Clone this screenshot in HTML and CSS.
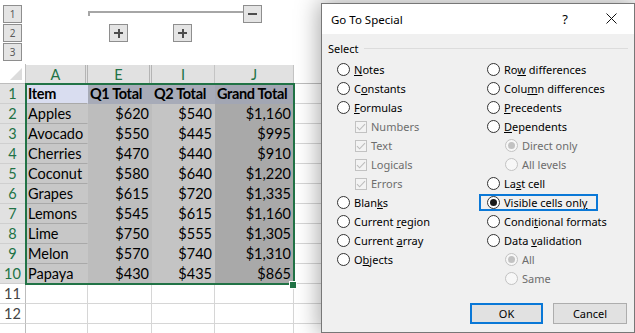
FILE: index.html
```html
<!DOCTYPE html>
<html>
<head>
<meta charset="utf-8">
<link rel="stylesheet" href="styles.css">
</head>
<body>
<div class="sheet">
  <div class="outline">
    <div class="levels">
      <div class="obtn">1</div>
      <div class="obtn">2</div>
      <div class="obtn">3</div>
    </div>
    <div class="groups">
      <div class="grow1">
        <div class="bracket"></div>
        <div class="obtn minus"><span class="bar"></span></div>
      </div>
      <div class="grow2">
        <div class="obtn plus p1"><span class="bar"></span><span class="vbar"></span></div>
        <div class="obtn plus p2"><span class="bar"></span><span class="vbar"></span></div>
      </div>
    </div>
  </div>
  <div class="grid">
    <div class="corner"></div><div class="ch hid">A</div><div class="ch hid">E</div><div class="ch">I</div><div class="ch">J</div><div class="chk"></div>

    <div class="rh sel">1</div><div class="c a1 b">Item</div><div class="c h1 b">Q1 Total</div><div class="c h1 b">Q2 Total</div><div class="c h1j b">Grand Total</div><div class="c"></div>
    <div class="rh sel">2</div><div class="c ca">Apples</div><div class="c ce r">$620</div><div class="c ci r">$540</div><div class="c cj r">$1,160</div><div class="c"></div>
    <div class="rh sel">3</div><div class="c ca">Avocado</div><div class="c ce r">$550</div><div class="c ci r">$445</div><div class="c cj r">$995</div><div class="c"></div>
    <div class="rh sel">4</div><div class="c ca">Cherries</div><div class="c ce r">$470</div><div class="c ci r">$440</div><div class="c cj r">$910</div><div class="c"></div>
    <div class="rh sel">5</div><div class="c ca">Coconut</div><div class="c ce r">$580</div><div class="c ci r">$640</div><div class="c cj r">$1,220</div><div class="c"></div>
    <div class="rh sel">6</div><div class="c ca">Grapes</div><div class="c ce r">$615</div><div class="c ci r">$720</div><div class="c cj r">$1,335</div><div class="c"></div>
    <div class="rh sel">7</div><div class="c ca">Lemons</div><div class="c ce r">$545</div><div class="c ci r">$615</div><div class="c cj r">$1,160</div><div class="c"></div>
    <div class="rh sel">8</div><div class="c ca">Lime</div><div class="c ce r">$750</div><div class="c ci r">$555</div><div class="c cj r">$1,305</div><div class="c"></div>
    <div class="rh sel">9</div><div class="c ca">Melon</div><div class="c ce r">$570</div><div class="c ci r">$740</div><div class="c cj r">$1,310</div><div class="c"></div>
    <div class="rh sel">10</div><div class="c ca">Papaya</div><div class="c ce r">$430</div><div class="c ci r">$435</div><div class="c cj r">$865</div><div class="c"></div>
    <div class="rh">11</div><div class="c"></div><div class="c"></div><div class="c"></div><div class="c"></div><div class="c"></div>
    <div class="rh">12</div><div class="c"></div><div class="c"></div><div class="c"></div><div class="c"></div><div class="c"></div>
    <div class="rh"></div><div class="c"></div><div class="c"></div><div class="c"></div><div class="c"></div><div class="c"></div>
  </div>
  <div class="selbox"><div class="handle"></div></div>
</div>

<div class="dialog">
  <div class="titlebar">
    <span class="title">Go To Special</span>
    <span class="help">?</span>
    <span class="close"><svg width="11" height="11" viewBox="0 0 11 11"><path d="M0.5 0.5 L10.5 10.5 M10.5 0.5 L0.5 10.5" stroke="#111" stroke-width="1" fill="none"/></svg></span>
  </div>
  <div class="dbody">
    <div class="legend"><span>Select</span><div class="rule"></div></div>
    <div class="opts">
      <div class="col">
        <div class="opt"><span class="radio"></span><span><u>N</u>otes</span></div>
        <div class="opt"><span class="radio"></span><span>C<u>o</u>nstants</span></div>
        <div class="opt"><span class="radio"></span><span><u>F</u>ormulas</span></div>
        <div class="opt sub dis"><span class="check"><svg width="12" height="12" viewBox="0 0 12 12"><path d="M2 6.2 L4.6 8.8 L10 3.2" stroke="#bdbdbd" stroke-width="1.1" fill="none"/></svg></span><span>Numbers</span></div>
        <div class="opt sub dis"><span class="check"><svg width="12" height="12" viewBox="0 0 12 12"><path d="M2 6.2 L4.6 8.8 L10 3.2" stroke="#bdbdbd" stroke-width="1.1" fill="none"/></svg></span><span>Text</span></div>
        <div class="opt sub dis"><span class="check"><svg width="12" height="12" viewBox="0 0 12 12"><path d="M2 6.2 L4.6 8.8 L10 3.2" stroke="#bdbdbd" stroke-width="1.1" fill="none"/></svg></span><span>Logicals</span></div>
        <div class="opt sub dis"><span class="check"><svg width="12" height="12" viewBox="0 0 12 12"><path d="M2 6.2 L4.6 8.8 L10 3.2" stroke="#bdbdbd" stroke-width="1.1" fill="none"/></svg></span><span>Errors</span></div>
        <div class="opt"><span class="radio"></span><span>Blan<u>k</u>s</span></div>
        <div class="opt"><span class="radio"></span><span>Current <u>r</u>egion</span></div>
        <div class="opt"><span class="radio"></span><span>Current <u>a</u>rray</span></div>
        <div class="opt"><span class="radio"></span><span>O<u>b</u>jects</span></div>
      </div>
      <div class="col">
        <div class="opt"><span class="radio"></span><span>Ro<u>w</u> differences</span></div>
        <div class="opt"><span class="radio"></span><span>Colu<u>m</u>n differences</span></div>
        <div class="opt"><span class="radio"></span><span><u>P</u>recedents</span></div>
        <div class="opt"><span class="radio"></span><span><u>D</u>ependents</span></div>
        <div class="opt sub dis"><span class="radio on"></span><span>Direct only</span></div>
        <div class="opt sub dis"><span class="radio"></span><span>All levels</span></div>
        <div class="opt"><span class="radio"></span><span>La<u>s</u>t cell</span></div>
        <div class="opt focused"><span class="focusring"></span><span class="radio on"></span><span>Visible cells onl<u>y</u></span></div>
        <div class="opt"><span class="radio"></span><span>Condi<u>t</u>ional formats</span></div>
        <div class="opt"><span class="radio"></span><span>Data <u>v</u>alidation</span></div>
        <div class="opt sub dis"><span class="radio on"></span><span>All</span></div>
        <div class="opt sub dis"><span class="radio"></span><span>Same</span></div>
      </div>
    </div>
    <div class="buttons">
      <div class="btn ok">OK</div>
      <div class="btn cancel">Cancel</div>
    </div>
  </div>
</div>
</body>
</html>
```

FILE: styles.css
```css
html, body {
  margin: 0;
  padding: 0;
}
body {
  width: 635px;
  height: 333px;
  overflow: hidden;
  position: relative;
  background: #ffffff;
  font-family: "Lato", "Liberation Sans", sans-serif;
}

/* ---------- outline controls ---------- */
.outline {
  display: flex;
  height: 64px;
  box-sizing: border-box;
  padding: 5px 0 0 3px;
}
.levels {
  display: flex;
  flex-direction: column;
  gap: 1px;
}
.obtn {
  width: 19px;
  height: 18px;
  box-sizing: border-box;
  border: 1px solid #8e8e8e;
  background: #e4e4e4;
  color: #5a5a5a;
  font-family: "Noto Sans", "DejaVu Sans", sans-serif;
  font-size: 10px;
  line-height: 16px;
  text-align: center;
  position: relative;
}
.groups {
  margin-left: 66px;
  display: flex;
  flex-direction: column;
  gap: 1px;
}
.grow1 {
  display: flex;
}
.bracket {
  width: 155px;
  height: 5px;
  margin-top: 6px;
  box-sizing: border-box;
  border-top: 2px solid #a6a6a6;
  border-left: 2px solid #a6a6a6;
}
.grow2 {
  display: flex;
}
.p1 { margin-left: 21px; }
.p2 { margin-left: 45px; }
.obtn .bar {
  position: absolute;
  left: 4px;
  top: 7px;
  width: 9px;
  height: 2px;
  background: #4d4d4d;
}
.obtn .vbar {
  position: absolute;
  left: 7.5px;
  top: 3.5px;
  width: 2px;
  height: 9px;
  background: #4d4d4d;
}

/* ---------- grid ---------- */
.grid {
  display: grid;
  grid-template-columns: 26px 62px 64px 63px 79px 1fr;
  grid-auto-rows: 20px;
}
.grid > div {
  box-sizing: border-box;
  border-right: 1px solid #d6d6d6;
  border-bottom: 1px solid #d6d6d6;
  font-size: 14.5px;
  line-height: 19px;
  white-space: nowrap;
  overflow: hidden;
  color: #000;
}
.corner {
  position: relative;
  background: #ffffff;
  border-right-color: #bdbdbd !important;
  border-bottom-color: #bdbdbd !important;
}
.corner::after {
  content: "";
  position: absolute;
  right: 3px;
  bottom: 3px;
  width: 0;
  height: 0;
  border-left: 12px solid transparent;
  border-bottom: 12px solid #dcdcdc;
}
.ch {
  background: #e1e1e1;
  color: #217346 !important;
  text-align: center;
  border-bottom-color: #bdbdbd !important;
  border-right-color: #c4c4c4 !important;
  margin-top: 1px;
}
.ch.hid {
  border-right: 3px double #b4b4b4 !important;
}
.chk {
  background: #ffffff;
  border-bottom-color: #bdbdbd !important;
}
.rh {
  text-align: center;
  color: #444 !important;
  background: #ffffff;
  border-right-color: #bdbdbd !important;
}
.rh.sel {
  background: #e1e1e1;
  color: #217346 !important;
  border-bottom-color: #cfcfcf !important;
}
.c {
  padding: 0 2px;
}
.r {
  text-align: right;
}
.b {
  font-weight: 700;
  letter-spacing: -0.35px;
}
.a1 {
  background: #d9ddf0;
  border-right-color: transparent !important;
  border-bottom-color: #a9a9a9 !important;
}
.h1 {
  background: #a7abb8;
  border-right-color: transparent !important;
  border-bottom-color: transparent !important;
}
.h1j {
  background: #a2a6b3;
  border-right-color: transparent !important;
  border-bottom-color: transparent !important;
}
.ca {
  background: #c7c7c7;
  border-right-color: transparent !important;
  border-bottom-color: #a9a9a9 !important;
}
.ce {
  background: #bdbdbd;
  border-right-color: transparent !important;
  border-bottom-color: transparent !important;
}
.ci {
  background: #c4c4c4;
  border-right-color: transparent !important;
  border-bottom-color: transparent !important;
}
.cj {
  background: #a9a9a9;
  border-right-color: transparent !important;
  border-bottom-color: transparent !important;
}
.selbox {
  position: absolute;
  left: 25px;
  top: 83px;
  width: 270px;
  height: 202px;
  box-sizing: border-box;
  border: 2px solid #217346;
}
.handle {
  position: absolute;
  left: 263px;
  top: 197px;
  width: 6px;
  height: 6px;
  background: #217346;
  box-shadow: 0 0 0 1px #ffffff;
}

/* ---------- dialog ---------- */
.dialog {
  position: absolute;
  left: 321px;
  top: 3px;
  width: 314px;
  height: 330px;
  box-sizing: border-box;
  border: 1px solid #777777;
  background: #f0f0f0;
  box-shadow: 0 0 22px 2px rgba(0, 0, 0, 0.35);
  display: flex;
  flex-direction: column;
  font-family: "Noto Sans", "DejaVu Sans", sans-serif;
  font-size: 11px;
  color: #000;
}
.titlebar {
  height: 30px;
  background: #ffffff;
  display: flex;
  align-items: center;
  padding-left: 9px;
}
.title {
  flex: 1;
  font-size: 11.5px;
}
.help {
  width: 46px;
  text-align: center;
  font-size: 13px;
}
.close {
  width: 46px;
  display: flex;
  justify-content: center;
  align-items: center;
  padding-bottom: 1px;
}
.dbody {
  flex: 1;
  display: flex;
  flex-direction: column;
  padding: 6px 6px 8px 6px;
}
.legend {
  height: 16px;
  display: flex;
  align-items: center;
  gap: 5px;
  margin-bottom: 4px;
}
.rule {
  flex: 1;
  height: 1px;
  background: #dcdcdc;
}
.opts {
  display: grid;
  grid-template-columns: 150px 1fr;
  margin-left: 9px;
}
.col {
  display: flex;
  flex-direction: column;
}
.opt {
  height: 19px;
  display: flex;
  align-items: center;
  gap: 4px;
  position: relative;
  white-space: nowrap;
}
.opt u {
  text-decoration: underline;
  text-underline-offset: 1px;
  text-decoration-thickness: 1px;
}
.opt.sub {
  margin-left: 18px;
}
.opt.dis {
  color: #6d6d6d;
}
.radio {
  width: 13px;
  height: 13px;
  box-sizing: border-box;
  border: 1px solid #333333;
  border-radius: 50%;
  background: #ffffff;
  display: flex;
  align-items: center;
  justify-content: center;
  flex: none;
}
.radio.on::after {
  content: "";
  width: 7px;
  height: 7px;
  border-radius: 50%;
  background: #1a1a1a;
}
.dis .radio {
  border-color: #c2c2c2;
  background: #f7f7f7;
}
.dis .radio.on::after {
  background: #c2c2c2;
}
.check {
  width: 12px;
  height: 12px;
  box-sizing: border-box;
  border: 1px solid #c2c2c2;
  background: #f3f3f3;
  display: flex;
  align-items: center;
  justify-content: center;
  flex: none;
}
.check svg {
  display: block;
  margin: -1px;
}
.focusring {
  position: absolute;
  left: -8px;
  top: 1px;
  width: 119px;
  height: 17px;
  box-sizing: border-box;
  border: 2px solid #0a78d7;
}
.buttons {
  margin-top: auto;
  display: flex;
  justify-content: flex-end;
  gap: 10px;
  padding-right: 1px;
}
.btn {
  height: 21px;
  box-sizing: border-box;
  background: #e1e1e1;
  border: 1px solid #adadad;
  display: flex;
  align-items: center;
  justify-content: center;
}
.btn.ok {
  width: 73px;
  border: 2px solid #0a78d7;
}
.btn.cancel {
  width: 74px;
}
```
